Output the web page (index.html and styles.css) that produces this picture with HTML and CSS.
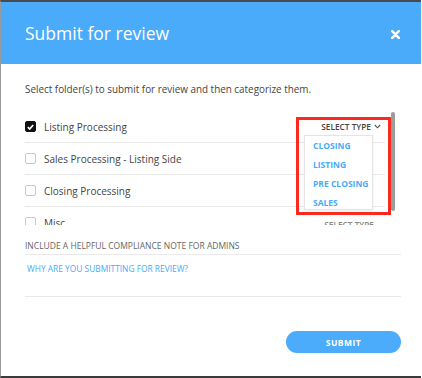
FILE: index.html
```html
<!DOCTYPE html>
<html>
<head>
<meta charset="utf-8">
<link rel="stylesheet" href="styles.css">
</head>
<body>
<div class="modal">
  <header class="header">
    <h1 class="title">Submit for review</h1>
    <svg class="close" width="9" height="9" viewBox="0 0 9 9"><path d="M1.2 1.2L7.8 7.8M7.8 1.2L1.2 7.8" stroke="#fff" stroke-width="2.4" stroke-linecap="round"/></svg>
  </header>
  <div class="content">
    <p class="intro">Select folder(s) to submit for review and then categorize them.</p>
    <div class="list-wrap">
      <div class="list">
        <div class="row">
          <label class="item"><span class="box checked"><svg width="7" height="6" viewBox="0 0 7 6"><path d="M0.8 3.2L2.7 5L6.2 1" stroke="#fff" stroke-width="1.7" fill="none"/></svg></span>Listing Processing</label>
          <span class="select">SELECT TYPE<svg width="7" height="5" viewBox="0 0 7 5"><path d="M0.8 1L3.5 3.8L6.2 1" stroke="#555" stroke-width="1.1" fill="none"/></svg></span>
        </div>
        <div class="row">
          <label class="item"><span class="box"></span>Sales Processing - Listing Side</label>
        </div>
        <div class="row">
          <label class="item"><span class="box"></span>Closing Processing</label>
        </div>
        <div class="row">
          <label class="item"><span class="box"></span>Misc</label>
          <span class="select faint">SELECT TYPE</span>
        </div>
      </div>
      <ul class="menu">
        <li>CLOSING</li>
        <li>LISTING</li>
        <li>PRE CLOSING</li>
        <li>SALES</li>
      </ul>
      <div class="highlight"></div>
      <div class="scrollbar"></div>
    </div>
    <div class="note-label">INCLUDE A HELPFUL COMPLIANCE NOTE FOR ADMINS</div>
    <div class="note">WHY ARE YOU SUBMITTING FOR REVIEW?</div>
    <div class="actions">
      <button class="submit">SUBMIT</button>
    </div>
  </div>
</div>
</body>
</html>
```

FILE: styles.css
```css
* { box-sizing: border-box; }
html, body { margin: 0; padding: 0; background: #fff; }
body { font-family: "Open Sans", "Liberation Sans", sans-serif; color: #444; }

.modal {
  width: 421px;
  height: 378px;
  border-top: 2px solid #4a4a4a;
  border-left: 1px solid #9a9a9a;
  border-bottom: 2px solid #3a3a3a;
  background: #fff;
  overflow: hidden;
}

.header {
  height: 62px;
  background: #49abfa;
  display: flex;
  align-items: center;
  justify-content: space-between;
  padding: 0 21px 0 24px;
}
.title {
  margin: 0;
  font-size: 17.5px;
  font-weight: 400;
  color: #fff;
}
.close { display: block; margin-top: 2px; }

.content { padding: 0 20px 0 24px; }

.intro {
  margin: 0;
  padding-top: 18px;
  font-size: 9.9px;
  line-height: 15px;
  color: #444;
}

.list-wrap {
  position: relative;
  margin-top: 14px;
}
.list {
  width: 360px;
  height: 114px;
  overflow: hidden;
}
.row {
  height: 32px;
  border-bottom: 1px solid #e9e9e9;
  display: flex;
  align-items: center;
  justify-content: space-between;
}
.item {
  display: flex;
  align-items: center;
  gap: 8px;
  font-size: 10px;
  color: #444;
}
.box {
  width: 11px;
  height: 11px;
  border: 1px solid #c8c8c8;
  border-radius: 2px;
  display: flex;
  align-items: center;
  justify-content: center;
}
.box.checked { background: #111; border-color: #111; }
.box svg { display: block; }

.select {
  display: flex;
  align-items: center;
  gap: 3px;
  padding-right: 4px;
  font-size: 8.3px;
  font-weight: 600;
  color: #444;
}
.select svg { display: block; }
.select.faint { color: #888; padding-right: 11px; margin-top: 3px; }

.menu {
  position: absolute;
  left: 279px;
  top: 24px;
  width: 69px;
  height: 75px;
  margin: 0;
  padding: 0 0 0 8px;
  list-style: none;
  background: #fff;
  border: 1px solid #e4e4e4;
  box-shadow: 0 1px 3px rgba(0,0,0,0.08);
}
.menu li {
  height: 19px;
  line-height: 19px;
  font-size: 8.5px;
  font-weight: 700;
  color: #49abfa;
}

.highlight {
  position: absolute;
  left: 271px;
  top: 6px;
  width: 95px;
  height: 98px;
  border: 3px solid #fa2a1f;
}
.scrollbar {
  position: absolute;
  left: 366px;
  top: 1px;
  width: 4px;
  height: 99px;
  background: #9c9c9c;
  border-radius: 2px;
}

.note-label {
  margin-top: 15px;
  padding-bottom: 2px;
  font-size: 8.5px;
  line-height: 12px;
  color: #666;
  border-bottom: 1px solid #e9e9e9;
  width: 376px;
}
.note {
  height: 42px;
  padding: 8px 0 0 2px;
  font-size: 8.4px;
  line-height: 12px;
  color: #49abfa;
  border-bottom: 1px solid #e9e9e9;
  width: 376px;
}

.actions {
  width: 376px;
  display: flex;
  justify-content: flex-end;
  margin-top: 34px;
}
.submit {
  width: 115px;
  height: 22px;
  border: 0;
  border-radius: 11px;
  background: #4aacfa;
  color: #fff;
  font-family: "Open Sans", "Liberation Sans", sans-serif;
  font-size: 8.5px;
  font-weight: 700;
  letter-spacing: 0.5px;
  padding: 0;
}
```
